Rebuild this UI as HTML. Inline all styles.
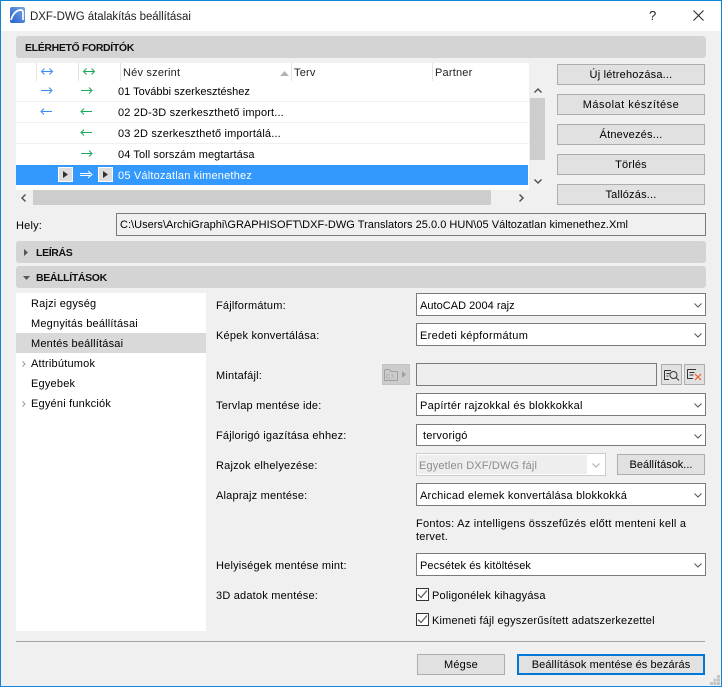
<!DOCTYPE html>
<html><head><meta charset="utf-8">
<style>
html,body{margin:0;padding:0;width:722px;height:687px;overflow:hidden;background:#f0f0f0}
body{position:relative;font-family:"Liberation Sans",sans-serif;font-size:11px;color:#000;letter-spacing:.2px}
div{position:absolute;box-sizing:border-box}
.t{white-space:nowrap;height:16px;line-height:18px}
.sec{left:16px;width:690px;height:22px;background:#d4d4d4;border-radius:3px}
.h{font-weight:bold;color:#111;font-size:10.5px;letter-spacing:-.35px}
.btn{background:#e1e1e1;border:1px solid #adadad;text-align:center;line-height:21px;white-space:nowrap}
.cb{left:416px;width:290px;height:23px;background:#fff;border:1px solid #7a7a7a;line-height:25px;padding-left:3px;white-space:nowrap}
.sep{width:1px;background:#e4e4e4}
.ln{left:16px;width:513px;height:1px;background:#f0f0f0}
svg{position:absolute;overflow:visible}
</style></head><body>
<!-- window frame -->
<div style="left:0;top:0;width:722px;height:31px;background:#fff"></div>
<svg style="left:10px;top:7px" width="15" height="16" viewBox="0 0 15 16"><defs><linearGradient id="g" x1="0" y1="1" x2="1" y2="0"><stop offset="0" stop-color="#1f5fd0"/><stop offset="1" stop-color="#7fa8e0"/></linearGradient></defs><rect width="15" height="16" rx="2" fill="url(#g)"/><path d="M1 13C3 6 7 3 11 3c1.500 0 2 1 2 3v7" fill="none" stroke="#fff" stroke-width="1.700"/></svg>
<div class="t" style="left:30px;top:8px;font-size:11.5px;color:#222;letter-spacing:-.05px">DXF-DWG átalakítás beállításai</div>
<div class="t" style="left:649px;top:7px;font-size:13px;color:#222">?</div>
<svg style="left:693px;top:10px" width="11" height="11"><path d="M.5.5l10 10M10.500.5l-10 10" stroke="#222" stroke-width="1" fill="none"/></svg>

<!-- section 1 -->
<div class="sec" style="top:36px"></div>
<div class="t h" style="left:25px;top:39px">ELÉRHETŐ FORDÍTÓK</div>

<!-- list -->
<div style="left:16px;top:63px;width:513px;height:127px;background:#fff"></div>
<div class="sep" style="left:36px;top:63px;height:18px"></div>
<div class="sep" style="left:78px;top:63px;height:18px"></div>
<div class="sep" style="left:120px;top:63px;height:18px"></div>
<div class="sep" style="left:291px;top:63px;height:18px"></div>
<div class="sep" style="left:432px;top:63px;height:18px"></div>
<svg style="left:41px;top:68px" width="12" height="8" fill="none" stroke="#3b8cf0"><path d="M.5 3.500h11M3.500.5L.5 3.500l3 3M8.500.5l3 3-3 3"/></svg>
<svg style="left:83px;top:68px" width="12" height="8" fill="none" stroke="#1aa85a"><path d="M.5 3.500h11M3.500.5L.5 3.500l3 3M8.500.5l3 3-3 3"/></svg>
<div class="t" style="left:123px;top:64px;color:#222">Név szerint</div>
<svg style="left:280px;top:71px" width="9" height="5"><path d="M0 5L4.500 0 9 5z" fill="#b4b4b4"/></svg>
<div class="t" style="left:294px;top:64px;color:#222">Terv</div>
<div class="t" style="left:435px;top:64px;color:#222">Partner</div>

<div class="ln" style="top:101px"></div>
<div class="ln" style="top:122px"></div>
<div class="ln" style="top:143px"></div>
<div style="left:16px;top:165px;width:512px;height:20px;background:#3399ff"></div>

<svg style="left:41px;top:87px" width="12" height="8" fill="none" stroke="#3b8cf0"><path d="M0 3.500h11M8 .5l3 3-3 3"/></svg>
<svg style="left:81px;top:87px" width="12" height="8" fill="none" stroke="#1aa85a"><path d="M0 3.500h11M8 .5l3 3-3 3"/></svg>
<svg style="left:40px;top:108px" width="12" height="8" fill="none" stroke="#3b8cf0"><path d="M12 3.500H1M4 .5l-3 3 3 3"/></svg>
<svg style="left:80px;top:108px" width="12" height="8" fill="none" stroke="#1aa85a"><path d="M12 3.500H1M4 .5l-3 3 3 3"/></svg>
<svg style="left:80px;top:129px" width="12" height="8" fill="none" stroke="#1aa85a"><path d="M12 3.500H1M4 .5l-3 3 3 3"/></svg>
<svg style="left:81px;top:150px" width="12" height="8" fill="none" stroke="#1aa85a"><path d="M0 3.500h11M8 .5l3 3-3 3"/></svg>
<div style="left:58px;top:167px;width:15px;height:15px;background:#ddd;border:1px solid #fff;outline:0"></div>
<svg style="left:63px;top:171px" width="5" height="7"><path d="M0 0l5 3.500L0 7z" fill="#333"/></svg>
<svg style="left:80px;top:170px" width="14" height="10" fill="none" stroke="#fff" stroke-width="1"><path d="M0 3.500h10M0 5.500h10M8 1l4 3.500L8 8"/></svg>
<div style="left:98px;top:167px;width:15px;height:15px;background:#ddd;border:1px solid #fff"></div>
<svg style="left:103px;top:171px" width="5" height="7"><path d="M0 0l5 3.500L0 7z" fill="#333"/></svg>

<div class="t" style="left:118px;top:83px;letter-spacing:0">01 További szerkesztéshez</div>
<div class="t" style="left:118px;top:104px;letter-spacing:.16px">02 2D-3D szerkeszthető import...</div>
<div class="t" style="left:118px;top:125px;letter-spacing:.16px">03 2D szerkeszthető importálá...</div>
<div class="t" style="left:118px;top:146px;letter-spacing:.09px">04 Toll sorszám megtartása</div>
<div class="t" style="left:118px;top:167px;color:#fff;letter-spacing:.2px">05 Változatlan kimenethez</div>

<!-- scrollbars -->
<div style="left:530px;top:98px;width:15px;height:62px;background:#cdcdcd"></div>
<svg style="left:534px;top:88px" width="8" height="5" fill="none" stroke="#555" stroke-width="1.500"><path d="M.5 4.500L4 1l3.500 3.500"/></svg>
<svg style="left:534px;top:179px" width="8" height="5" fill="none" stroke="#555" stroke-width="1.500"><path d="M.5.5L4 4 7.500.5"/></svg>
<div style="left:33px;top:190px;width:458px;height:15px;background:#cdcdcd"></div>
<svg style="left:21px;top:194px" width="5" height="8" fill="none" stroke="#555" stroke-width="1.500"><path d="M4.500.5L1 4l3.500 3.500"/></svg>
<svg style="left:519px;top:194px" width="5" height="8" fill="none" stroke="#555" stroke-width="1.500"><path d="M.5.5L4 4 .5 7.500"/></svg>

<!-- right buttons -->
<div class="btn" style="left:557px;top:64px;width:148px;height:21px">Új létrehozása...</div>
<div class="btn" style="left:557px;top:94px;width:148px;height:21px;letter-spacing:.5px">Másolat készítése</div>
<div class="btn" style="left:557px;top:124px;width:148px;height:21px">Átnevezés...</div>
<div class="btn" style="left:557px;top:154px;width:148px;height:21px">Törlés</div>
<div class="btn" style="left:557px;top:184px;width:148px;height:21px">Tallózás...</div>

<!-- Hely -->
<div class="t" style="left:16px;top:217px">Hely:</div>
<div style="left:116px;top:213px;width:590px;height:23px;border:1px solid #7a7a7a;background:#f0f0f0;line-height:23px;padding-left:3px;white-space:nowrap;letter-spacing:.02px">C:\Users\ArchiGraphi\GRAPHISOFT\DXF-DWG Translators 25.0.0 HUN\05 Változatlan kimenethez.Xml</div>

<!-- section headers -->
<div class="sec" style="top:241px"></div>
<svg style="left:24px;top:249px" width="4" height="7"><path d="M0 0l4 3.500L0 7z" fill="#555"/></svg>
<div class="t h" style="left:36px;top:244px">LEÍRÁS</div>
<div class="sec" style="top:266px"></div>
<svg style="left:23px;top:276px" width="7" height="4"><path d="M0 0h7L3.500 4z" fill="#555"/></svg>
<div class="t h" style="left:36px;top:269px">BEÁLLÍTÁSOK</div>

<!-- left tree -->
<div style="left:16px;top:293px;width:190px;height:338px;background:#fff"></div>
<div style="left:16px;top:333px;width:190px;height:20px;background:#d9d9d9"></div>
<div class="t" style="left:31px;top:295px">Rajzi egység</div>
<div class="t" style="left:31px;top:315px">Megnyitás beállításai</div>
<div class="t" style="left:31px;top:335px">Mentés beállításai</div>
<div class="t" style="left:31px;top:355px">Attribútumok</div>
<div class="t" style="left:31px;top:375px">Egyebek</div>
<div class="t" style="left:31px;top:395px">Egyéni funkciók</div>
<svg style="left:22px;top:361px" width="4" height="6" fill="none" stroke="#999"><path d="M.5.5L3 3 .5 5.500"/></svg>
<svg style="left:22px;top:401px" width="4" height="6" fill="none" stroke="#999"><path d="M.5.5L3 3 .5 5.500"/></svg>

<!-- labels -->
<div class="t" style="left:216px;top:297px">Fájlformátum:</div>
<div class="t" style="left:216px;top:327px">Képek konvertálása:</div>
<div class="t" style="left:216px;top:367px">Mintafájl:</div>
<div class="t" style="left:216px;top:397px">Tervlap mentése ide:</div>
<div class="t" style="left:216px;top:427px">Fájlorigó igazítása ehhez:</div>
<div class="t" style="left:216px;top:457px">Rajzok elhelyezése:</div>
<div class="t" style="left:216px;top:487px">Alaprajz mentése:</div>
<div class="t" style="left:216px;top:557px">Helyiségek mentése mint:</div>
<div class="t" style="left:216px;top:587px">3D adatok mentése:</div>

<!-- combos -->
<div class="cb" style="top:293px;letter-spacing:.03px">AutoCAD 2004 rajz</div>
<div class="cb" style="top:323px;letter-spacing:.32px">Eredeti képformátum</div>
<div class="cb" style="top:393px;letter-spacing:.25px">Papírtér rajzokkal és blokkokkal</div>
<div class="cb" style="top:424px;height:22px;padding-left:6px;line-height:22px">tervorigó</div>
<div class="cb" style="top:483px;letter-spacing:.22px">Archicad elemek konvertálása blokkokká</div>
<div class="cb" style="top:553px;letter-spacing:.1px">Pecsétek és kitöltések</div>
<svg style="left:694px;top:303px" width="8" height="5" fill="none" stroke="#555"><path d="M.5.5L4 4 7.500.5"/></svg>
<svg style="left:694px;top:333px" width="8" height="5" fill="none" stroke="#555"><path d="M.5.5L4 4 7.500.5"/></svg>
<svg style="left:694px;top:403px" width="8" height="5" fill="none" stroke="#555"><path d="M.5.5L4 4 7.500.5"/></svg>
<svg style="left:694px;top:434px" width="8" height="5" fill="none" stroke="#555"><path d="M.5.5L4 4 7.500.5"/></svg>
<svg style="left:694px;top:493px" width="8" height="5" fill="none" stroke="#555"><path d="M.5.5L4 4 7.500.5"/></svg>
<svg style="left:694px;top:563px" width="8" height="5" fill="none" stroke="#555"><path d="M.5.5L4 4 7.500.5"/></svg>

<!-- Mintafajl row -->
<div style="left:382px;top:364px;width:28px;height:21px;background:#cccccc;border:1px solid #c4c4c4"></div>
<svg style="left:384px;top:368px" width="24" height="13" fill="none" stroke="#a0a0a0"><path d="M.5 2.500V12.500H13.500V3.500H7L5.500 1.500H1.500z"/><path d="M18 3l4 3.500-4 3.500z" fill="#a0a0a0" stroke="none"/><text x="2" y="10.500" font-size="6" font-family="Liberation Sans" fill="#a0a0a0" stroke="none" letter-spacing="0">C:\</text></svg>
<div style="left:416px;top:363px;width:241px;height:23px;background:#eee;border:1px solid #7a7a7a"></div>
<div style="left:661px;top:364px;width:21px;height:21px;background:#e1e1e1;border:1px solid #adadad"></div>
<div style="left:684px;top:364px;width:21px;height:21px;background:#e1e1e1;border:1px solid #adadad"></div>
<svg style="left:664px;top:370px" width="16" height="11" fill="none" stroke="#333"><path d="M.5 .5H7M.5 .5V9.500H5M2.500 3.500h3M2.500 6h2"/><circle cx="9.500" cy="5" r="3.500"/><path d="M12 7.500l3 3"/></svg>
<svg style="left:687px;top:369px" width="16" height="12" fill="none"><path d="M.5 .5H9M.5 .5V9.500H6M2.500 3.500h5M2.500 6h4" stroke="#333"/><path d="M8 5l6 6M14 5l-6 6" stroke="#f25a30" stroke-width="1.200"/></svg>

<!-- disabled combo -->
<div style="left:416px;top:453px;width:190px;height:23px;background:#fff;border:1px solid #ccc"></div>
<div style="left:418px;top:455px;width:169px;height:19px;background:#eee"></div>
<div class="t" style="left:419px;top:457px;color:#8c8c8c;letter-spacing:.15px">Egyetlen DXF/DWG fájl</div>
<svg style="left:592px;top:463px" width="8" height="5" fill="none" stroke="#aaa"><path d="M.5.5L4 4 7.500.5"/></svg>
<div class="btn" style="left:617px;top:454px;width:88px;height:21px;letter-spacing:0">Beállítások...</div>

<!-- note -->
<div class="t" style="left:416px;top:515px;letter-spacing:.25px">Fontos: Az intelligens összefűzés előtt menteni kell a</div>
<div class="t" style="left:416px;top:528px">tervet.</div>

<!-- checkboxes -->
<div style="left:416px;top:588px;width:13px;height:13px;background:#fff;border:1px solid #333"></div>
<svg style="left:418px;top:590px" width="10" height="9" fill="none" stroke="#555" stroke-width="1.200"><path d="M0 4.500L3 7.500 9 .5"/></svg>
<div class="t" style="left:432px;top:587px">Poligonélek kihagyása</div>
<div style="left:416px;top:613px;width:13px;height:13px;background:#fff;border:1px solid #333"></div>
<svg style="left:418px;top:615px" width="10" height="9" fill="none" stroke="#555" stroke-width="1.200"><path d="M0 4.500L3 7.500 9 .5"/></svg>
<div class="t" style="left:432px;top:612px;letter-spacing:.18px">Kimeneti fájl egyszerűsített adatszerkezettel</div>

<!-- bottom -->
<div style="left:16px;top:641px;width:689px;height:1px;background:#a0a0a0"></div>
<div class="btn" style="left:417px;top:654px;width:88px;height:21px">Mégse</div>
<div class="btn" style="left:517px;top:654px;width:188px;height:21px;border:2px solid #0078d7;line-height:19px;letter-spacing:.09px">Beállítások mentése és bezárás</div>
<svg style="left:710px;top:675px" width="10" height="10" fill="#c4c4c4"><rect x="7" y="0" width="3" height="3"/><rect x="3.500" y="3.500" width="3" height="3"/><rect x="7" y="3.500" width="3" height="3"/><rect x="0" y="7" width="3" height="3"/><rect x="3.500" y="7" width="3" height="3"/><rect x="7" y="7" width="3" height="3"/></svg>

<!-- window border -->
<div style="left:0;top:0;width:722px;height:687px;border:1px solid #0f85d8;pointer-events:none"></div>
</body></html>
